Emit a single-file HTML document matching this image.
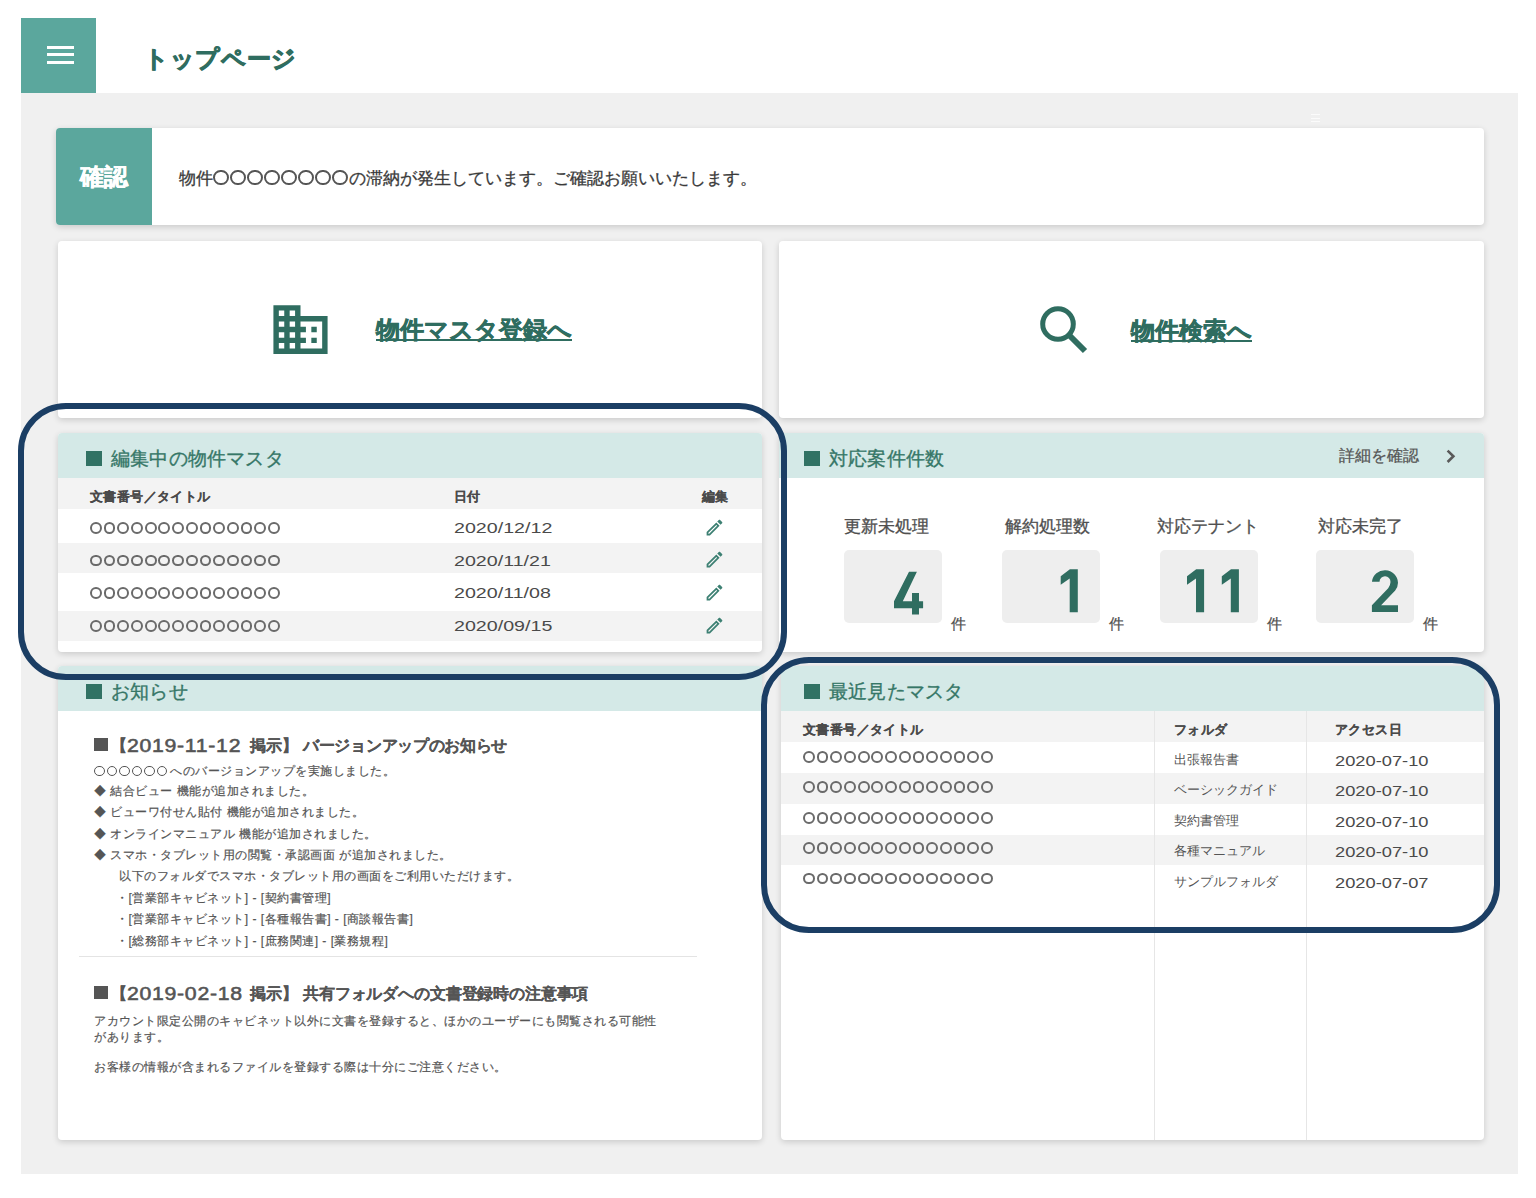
<!DOCTYPE html>
<html lang="ja">
<head>
<meta charset="utf-8">
<style>
*{box-sizing:border-box;margin:0;padding:0}
html,body{width:1536px;height:1198px;overflow:hidden;background:#fff}
body{position:relative;font-family:"Liberation Sans",sans-serif;color:#444}
.abs{position:absolute}
.hamb{left:21px;top:18px;width:75px;height:75px;background:#5ba79d}
.hamb i{position:absolute;left:26px;width:27px;height:3px;background:#fff}
.title{left:144px;top:43px;font-size:24px;font-weight:bold;color:#2f6d60;line-height:32px;white-space:nowrap;letter-spacing:0.7px;-webkit-text-stroke:0.9px #2f6d60}
.main{left:21px;top:93px;width:1497px;height:1081px;background:#f0f0f0}
.card{position:absolute;background:#fff;border-radius:4px;box-shadow:0 2px 6px rgba(0,0,0,.16);overflow:hidden}
.confirm{left:56px;top:128px;width:1428px;height:97px}
.confirm .lab{position:absolute;left:0;top:0;width:96px;height:97px;background:#5ba79d;color:#fff;font-size:24px;font-weight:bold;line-height:97px;text-align:center;-webkit-text-stroke:0.4px #fff}
.confirm .msg{position:absolute;left:123px;top:40px;font-size:16.7px;line-height:22px;color:#3a3a3a;white-space:nowrap;-webkit-text-stroke:0.3px #3a3a3a}
.oc2{display:inline-block;white-space:nowrap;font-size:0;vertical-align:-1px}
.oc2 b{display:inline-block;width:15.5px;height:15.5px;border:2px solid #555;border-radius:50%;margin:0 1.5px 0 0}
.link1{left:58px;top:241px;width:704px;height:177px}
.link2{left:779px;top:241px;width:705px;height:177px}
.lnk{position:absolute;font-size:23.8px;font-weight:bold;color:#2f6d60;text-decoration:underline;text-decoration-thickness:2px;text-underline-offset:1px;line-height:30px;white-space:nowrap;-webkit-text-stroke:0.6px #2f6d60}
.hd{position:absolute;left:0;top:0;width:100%;height:45px;background:#d4e9e7}
.hd .sq{position:absolute;left:28px;top:17.5px;width:16px;height:15.5px;background:#317264}
.hd .t{position:absolute;left:53px;top:14px;font-size:19px;letter-spacing:0.2px;line-height:24px;color:#367767;white-space:nowrap;-webkit-text-stroke:0.35px #367767}
.r .hd .sq{left:25px}
.r .hd .t{left:50px}
.edit{left:58px;top:433px;width:704px;height:219px}
.stats{left:779px;top:433px;width:705px;height:219px}
.notice{left:58px;top:666px;width:704px;height:474px}
.recent{left:781px;top:666px;width:702.5px;height:474px}
.ring{position:absolute;border:6.2px solid #1b3e64;border-radius:48px}
.th{position:absolute;left:0;width:100%;background:#f3f3f3}
.th span{position:absolute;top:11px;font-size:13px;letter-spacing:0.4px;line-height:16px;font-weight:bold;color:#4a4a4a;white-space:nowrap;-webkit-text-stroke:0.1px #4a4a4a}
.er,.rr{position:absolute;left:0;width:100%;height:33px}
.rr{height:31px}
.oc{position:absolute;left:32px;top:13px;height:14px;white-space:nowrap;font-size:0}
.rr .oc{left:24px;top:9px}
.oc b{display:inline-block;width:11.8px;height:11.8px;border:2px solid #6a6a6a;border-radius:50%;margin-right:1.9px}
.sx{display:inline-block;transform-origin:0 0;white-space:nowrap}
.dt{position:absolute;left:454px;top:10px;font-size:15px;line-height:18px;color:#4a4a4a;white-space:nowrap}
.pen{position:absolute;left:645.5px;top:7.5px}
.fd{position:absolute;left:395px;top:10px;font-size:13px;line-height:16px;color:#555;white-space:nowrap}
.dt2{position:absolute;left:556px;top:10px;font-size:14.5px;line-height:18px;color:#4a4a4a;white-space:nowrap}
.more{position:absolute;left:560px;top:13px;font-size:16px;line-height:20px;color:#555;white-space:nowrap;-webkit-text-stroke:0.25px #555}
.lab{position:absolute;top:83px;font-size:17px;line-height:22px;color:#4f4f4f;white-space:nowrap;-webkit-text-stroke:0.3px #4f4f4f}
.box{position:absolute;top:117px;width:98px;height:73px;background:#eee;border-radius:5px}
.num{position:absolute;top:131px;font-size:62px;line-height:62px;font-weight:bold;color:#2f6d60;white-space:nowrap}
.ken{position:absolute;top:182px;font-size:15px;line-height:18px;color:#4f4f4f;-webkit-text-stroke:0.25px #4f4f4f}
.nh{position:absolute;left:36px;width:600px;height:20px;font-size:16px;line-height:20px;font-weight:bold;color:#555;white-space:nowrap;-webkit-text-stroke:0.1px #555}
.nh i{display:inline-block;width:14px;height:13px;background:#555;margin-right:4px;vertical-align:-1px}
.nl{position:absolute;font-size:12px;letter-spacing:0.5px;line-height:16px;color:#555;white-space:nowrap;-webkit-text-stroke:0.2px #555}
.oc3{display:inline-block;white-space:nowrap;font-size:0;vertical-align:-1px;margin-right:1px}
.oc3 b{display:inline-block;width:10.5px;height:10.5px;border:1px solid #555;border-radius:50%;margin-right:2px}
.nh span{position:absolute;top:0;white-space:nowrap}
.nh .dg{font-family:'Liberation Sans',sans-serif;font-weight:normal;-webkit-text-stroke:0.55px #555;font-size:18px;line-height:20px;transform-origin:0 0;letter-spacing:0.6px}
.nh b{position:absolute;left:0;top:2px;width:13.6px;height:12.6px;background:#555}
</style>
</head>
<body>
<div class="abs hamb"><i style="top:28px"></i><i style="top:35px"></i><i style="top:43px"></i></div>
<div class="abs title">トップページ</div>
<div class="abs main"></div>
<div class="abs" style="left:1311px;top:114px;width:9px;height:1.2px;background:rgba(255,255,255,.75)"></div><div class="abs" style="left:1311px;top:117.5px;width:9px;height:1.2px;background:rgba(255,255,255,.75)"></div><div class="abs" style="left:1311px;top:121px;width:9px;height:1.2px;background:rgba(255,255,255,.75)"></div>
<div class="card confirm"><div class="lab">確認</div><div class="msg">物件<span class="oc2" style=""><b></b><b></b><b></b><b></b><b></b><b></b><b></b><b></b></span>の滞納が発生しています。ご確認お願いいたします。</div></div>
<div class="card link1">
  <svg class="abs" style="left:210px;top:56px" width="65" height="65" viewBox="0 0 24 24"><path fill="#2f6d60" d="M12 7V3H2v18h20V7H12zM6 19H4v-2h2v2zm0-4H4v-2h2v2zm0-4H4V9h2v2zm0-4H4V5h2v2zm4 12H8v-2h2v2zm0-4H8v-2h2v2zm0-4H8V9h2v2zm0-4H8V5h2v2zm10 12h-8v-2h2v-2h-2v-2h2v-2h-2V9h8v10zm-2-8h-2v2h2v-2zm0 4h-2v2h2v-2z"/></svg>
  <div class="lnk" style="left:318px;top:74px">物件マスタ登録へ</div>
</div>
<div class="card link2">
  <svg class="abs" style="left:250px;top:54px" width="70" height="70" viewBox="0 0 70 70"><circle cx="29" cy="29" r="15.3" fill="none" stroke="#2f6d60" stroke-width="5"/><line x1="39.5" y1="39.5" x2="56" y2="56" stroke="#2f6d60" stroke-width="6"/></svg>
  <div class="lnk" style="left:352px;top:75px">物件検索へ</div>
</div>
<div class="card edit">
  <div class="hd"><div class="sq"></div><div class="t">編集中の物件マスタ</div></div>
  <div class="th" style="top:45px;height:31px"><span style="left:32px">文書番号／タイトル</span><span style="left:396px">日付</span><span style="left:644px">編集</span></div>
<div class="abs" style="left:0;top:109.6px;width:100%;height:30px;background:#f3f3f3"></div><div class="abs" style="left:0;top:178.4px;width:100%;height:29.5px;background:#f3f3f3"></div>
<div class="er" style="top:76.0px"><span class="oc" style=""><b></b><b></b><b></b><b></b><b></b><b></b><b></b><b></b><b></b><b></b><b></b><b></b><b></b><b></b></span><span class="dt" style="left:396px"><span class="sx" style="transform:scaleX(1.31)">2020/12/12</span></span><svg class="pen" width="21" height="21" viewBox="0 0 24 24"><path fill="#3d8073" d="M3 17.25V21h3.75L17.81 9.94l-3.75-3.75L3 17.25zM5.92 19H5v-.92l9.06-9.06.92.92L5.92 19zM20.71 5.63l-2.34-2.34c-.2-.2-.45-.29-.71-.29s-.51.1-.7.29l-1.83 1.83 3.75 3.75 1.83-1.83c.39-.39.39-1.02 0-1.41z"/></svg></div>
<div class="er" style="top:108.7px"><span class="oc" style=""><b></b><b></b><b></b><b></b><b></b><b></b><b></b><b></b><b></b><b></b><b></b><b></b><b></b><b></b></span><span class="dt" style="left:396px"><span class="sx" style="transform:scaleX(1.31)">2020/11/21</span></span><svg class="pen" width="21" height="21" viewBox="0 0 24 24"><path fill="#3d8073" d="M3 17.25V21h3.75L17.81 9.94l-3.75-3.75L3 17.25zM5.92 19H5v-.92l9.06-9.06.92.92L5.92 19zM20.71 5.63l-2.34-2.34c-.2-.2-.45-.29-.71-.29s-.51.1-.7.29l-1.83 1.83 3.75 3.75 1.83-1.83c.39-.39.39-1.02 0-1.41z"/></svg></div>
<div class="er" style="top:141.4px"><span class="oc" style=""><b></b><b></b><b></b><b></b><b></b><b></b><b></b><b></b><b></b><b></b><b></b><b></b><b></b><b></b></span><span class="dt" style="left:396px"><span class="sx" style="transform:scaleX(1.31)">2020/11/08</span></span><svg class="pen" width="21" height="21" viewBox="0 0 24 24"><path fill="#3d8073" d="M3 17.25V21h3.75L17.81 9.94l-3.75-3.75L3 17.25zM5.92 19H5v-.92l9.06-9.06.92.92L5.92 19zM20.71 5.63l-2.34-2.34c-.2-.2-.45-.29-.71-.29s-.51.1-.7.29l-1.83 1.83 3.75 3.75 1.83-1.83c.39-.39.39-1.02 0-1.41z"/></svg></div>
<div class="er" style="top:174.1px"><span class="oc" style=""><b></b><b></b><b></b><b></b><b></b><b></b><b></b><b></b><b></b><b></b><b></b><b></b><b></b><b></b></span><span class="dt" style="left:396px"><span class="sx" style="transform:scaleX(1.31)">2020/09/15</span></span><svg class="pen" width="21" height="21" viewBox="0 0 24 24"><path fill="#3d8073" d="M3 17.25V21h3.75L17.81 9.94l-3.75-3.75L3 17.25zM5.92 19H5v-.92l9.06-9.06.92.92L5.92 19zM20.71 5.63l-2.34-2.34c-.2-.2-.45-.29-.71-.29s-.51.1-.7.29l-1.83 1.83 3.75 3.75 1.83-1.83c.39-.39.39-1.02 0-1.41z"/></svg></div>
</div>
<div class="card stats r">
  <div class="hd"><div class="sq"></div><div class="t">対応案件件数</div><div class="more">詳細を確認</div>
  <svg class="abs" style="left:664px;top:14px" width="14" height="18" viewBox="0 0 14 18"><path d="M4.6 3.6L10.4 9.3 4.6 15" fill="none" stroke="#5a5a5a" stroke-width="2.6"/></svg></div>
  <div class="lab" style="left:65px">更新未処理</div>
  <div class="lab" style="left:226px">解約処理数</div>
  <div class="lab" style="left:378px">対応テナント</div>
  <div class="lab" style="left:539px">対応未完了</div>
  <div class="box" style="left:65px"></div><div class="box" style="left:223px"></div><div class="box" style="left:381px"></div><div class="box" style="left:537px"></div>
  <svg class="abs" style="left:0;top:0" width="705" height="219" viewBox="779 433 705 219"><g fill="#2f6d60">
  <path d="M909 571.7 L916.9 571.7 L902.8 601.2 L912 601.2 L912 593 L919 593 L919 601.2 L923.1 601.2 L923.1 608.3 L919 608.3 L919 614.5 L912 614.5 L912 608.3 L894 608.3 L894 601.2 Z"/>
  <path d="M1069.9 569.3 L1077.8 569.3 L1077.8 612.2 L1069.7 612.2 L1069.7 578.4 L1060.7 584.8 L1060.7 576.3 Z"/><path d="M1196.2 569.3 L1204.1 569.3 L1204.1 612.2 L1196.0 612.2 L1196.0 578.4 L1187 584.8 L1187 576.3 Z"/><path d="M1231.0 569.3 L1238.8999999999999 569.3 L1238.8999999999999 612.2 L1230.8 612.2 L1230.8 578.4 L1221.8 584.8 L1221.8 576.3 Z"/>
  <path d="M1371.9 581.7 L1379.5 581.7 A5.5 5.5 0 0 1 1390.5 582 Q1390.5 585 1388.2 588.2 L1371.9 605.3 L1371.9 612.1 L1398 612.1 L1398 605.3 L1381.1 605.3 L1395.2 590.4 Q1398 587 1398 582.8 A13.1 13.1 0 0 0 1371.9 581.7 Z"/>
  </g></svg>
  <div class="ken" style="left:172px">件</div><div class="ken" style="left:330px">件</div><div class="ken" style="left:488px">件</div><div class="ken" style="left:644px">件</div>
</div>
<div class="card notice">
  <div class="hd"><div class="sq"></div><div class="t">お知らせ</div></div>
  <div class="nh" style="top:70px"><b></b><span style="left:17px">【</span><span class="dg" style="left:33px;transform:scaleX(1.18)">2019-11-12</span><span style="left:156px">掲示】</span><span style="left:209px;letter-spacing:-0.3px">バージョンアップのお知らせ</span></div>
  <div class="nl" style="top:97px;left:36px"><span class="oc3" style=""><b></b><b></b><b></b><b></b><b></b><b></b></span>へのバージョンアップを実施しました。</div>
  <div class="nl" style="top:117px;left:36px">◆ 結合ビュー 機能が追加されました。</div>
  <div class="nl" style="top:138px;left:36px">◆ ビューワ付せん貼付 機能が追加されました。</div>
  <div class="nl" style="top:160px;left:36px">◆ オンラインマニュアル 機能が追加されました。</div>
  <div class="nl" style="top:181px;left:36px">◆ スマホ・タブレット用の閲覧・承認画面 が追加されました。</div>
  <div class="nl" style="top:202px;left:61px">以下のフォルダでスマホ・タブレット用の画面をご利用いただけます。</div>
  <div class="nl" style="top:224px;left:58px">・[営業部キャビネット] - [契約書管理]</div>
  <div class="nl" style="top:245px;left:58px">・[営業部キャビネット] - [各種報告書] - [商談報告書]</div>
  <div class="nl" style="top:267px;left:58px">・[総務部キャビネット] - [庶務関連] - [業務規程]</div>
  <div class="abs" style="left:21px;top:290px;width:618px;height:1px;background:#e4e4e4"></div>
  <div class="nh" style="top:318px"><b></b><span style="left:17px">【</span><span class="dg" style="left:33px;transform:scaleX(1.18)">2019-02-18</span><span style="left:156px">掲示】</span><span style="left:209px;letter-spacing:-0.15px">共有フォルダへの文書登録時の注意事項</span></div>
  <div class="nl" style="top:347px;left:36px;line-height:16px">アカウント限定公開のキャビネット以外に文書を登録すると、ほかのユーザーにも閲覧される可能性<br>があります。</div>
  <div class="nl" style="top:393px;left:36px">お客様の情報が含まれるファイルを登録する際は十分にご注意ください。</div>
</div>
<div class="card recent r"><div class="abs" style="left:-2px;top:0;width:705px;height:474px">
  <div class="hd"><div class="sq"></div><div class="t">最近見たマスタ</div></div>
  <div class="th" style="top:45px;height:31px"><span style="left:24px">文書番号／タイトル</span><span style="left:395px">フォルダ</span><span style="left:556px">アクセス日</span></div>
<div class="abs" style="left:0;top:106.6px;width:100%;height:31px;background:#f3f3f3"></div><div class="abs" style="left:0;top:169.3px;width:100%;height:30.1px;background:#f3f3f3"></div>
<div class="rr" style="top:76.0px"><span class="oc" style=""><b></b><b></b><b></b><b></b><b></b><b></b><b></b><b></b><b></b><b></b><b></b><b></b><b></b><b></b></span><span class="fd">出張報告書</span><span class="dt2"><span class="sx" style="transform:scaleX(1.26)">2020-07-10</span></span></div>
<div class="rr" style="top:106.4px"><span class="oc" style=""><b></b><b></b><b></b><b></b><b></b><b></b><b></b><b></b><b></b><b></b><b></b><b></b><b></b><b></b></span><span class="fd">ベーシックガイド</span><span class="dt2"><span class="sx" style="transform:scaleX(1.26)">2020-07-10</span></span></div>
<div class="rr" style="top:136.8px"><span class="oc" style=""><b></b><b></b><b></b><b></b><b></b><b></b><b></b><b></b><b></b><b></b><b></b><b></b><b></b><b></b></span><span class="fd">契約書管理</span><span class="dt2"><span class="sx" style="transform:scaleX(1.26)">2020-07-10</span></span></div>
<div class="rr" style="top:167.2px"><span class="oc" style=""><b></b><b></b><b></b><b></b><b></b><b></b><b></b><b></b><b></b><b></b><b></b><b></b><b></b><b></b></span><span class="fd">各種マニュアル</span><span class="dt2"><span class="sx" style="transform:scaleX(1.26)">2020-07-10</span></span></div>
<div class="rr" style="top:197.6px"><span class="oc" style=""><b></b><b></b><b></b><b></b><b></b><b></b><b></b><b></b><b></b><b></b><b></b><b></b><b></b><b></b></span><span class="fd">サンプルフォルダ</span><span class="dt2"><span class="sx" style="transform:scaleX(1.26)">2020-07-07</span></span></div>
  <div class="abs" style="left:375px;top:45px;width:1px;height:430px;background:#e6e6e6"></div>
  <div class="abs" style="left:527px;top:45px;width:1px;height:430px;background:#e6e6e6"></div>
</div></div>
<div class="ring" style="left:18.4px;top:403.4px;width:768.6px;height:276.4px"></div>
<div class="ring" style="left:760.5px;top:657px;width:739.2px;height:275.7px"></div>
</body>
</html>
